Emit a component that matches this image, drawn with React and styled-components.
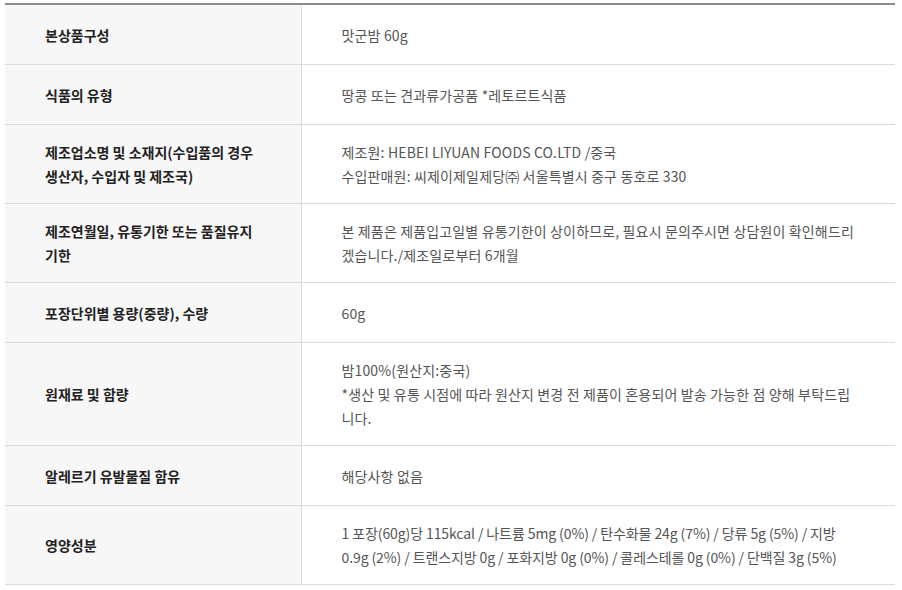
import React from 'react';
import styled, { createGlobalStyle } from 'styled-components';

const Global = createGlobalStyle`
  body {
    margin: 0;
    background: #fff;
    font-family: "Noto Sans CJK KR", "Noto Sans", sans-serif;
  }
`;

const Wrap = styled.div`
  padding: 3px 7px 0 5px;
`;

const Table = styled.table`
  width: 100%;
  border-collapse: collapse;
  border-top: 2px solid #8c8c8c;
  line-height: 24px;
`;

const Row = styled.tr`
  border-bottom: 1px solid #dcdcdc;
`;

const Th = styled.th`
  width: 296px;
  box-sizing: border-box;
  background: #f7f7f7;
  border-right: 1px solid #dcdcdc;
  padding: 15px 40px;
  text-align: left;
  vertical-align: middle;
  font-size: 14px;
  letter-spacing: 0;
  font-weight: 700;
  color: #222;
`;

const Td = styled.td`
  padding: 15px 40px;
  text-align: left;
  vertical-align: middle;
  font-size: 14px;
  letter-spacing: 0.15px;
  color: #555;
`;

const Cell = styled.div`
  min-height: 29px;
  display: flex;
  flex-direction: column;
  justify-content: center;
`;

const Line = styled.div`
  white-space: nowrap;
  letter-spacing: ${p => (p.$tight ? '-0.1px' : 'inherit')};
`;

const rows = [
  ['본상품구성', ['맛군밤 60g']],
  ['식품의 유형', ['땅콩 또는 견과류가공품 *레토르트식품']],
  ['제조업소명 및 소재지(수입품의 경우\n생산자, 수입자 및 제조국)', ['제조원: HEBEI LIYUAN FOODS CO.LTD /중국', '수입판매원: 씨제이제일제당㈜ 서울특별시 중구 동호로 330']],
  ['제조연월일, 유통기한 또는 품질유지\n기한', ['본 제품은 제품입고일별 유통기한이 상이하므로, 필요시 문의주시면 상담원이 확인해드리', '겠습니다./제조일로부터 6개월']],
  ['포장단위별 용량(중량), 수량', ['60g']],
  ['원재료 및 함량', ['밤100%(원산지:중국)', '*생산 및 유통 시점에 따라 원산지 변경 전 제품이 혼용되어 발송 가능한 점 양해 부탁드립', '니다.']],
  ['알레르기 유발물질 함유', ['해당사항 없음']],
  ['영양성분', ['1 포장(60g)당 115kcal / 나트륨 5mg (0%) / 탄수화물 24g (7%) / 당류 5g (5%) / 지방', '0.9g (2%) / 트랜스지방 0g / 포화지방 0g (0%) / 콜레스테롤 0g (0%) / 단백질 3g (5%)'], true],
];

export default function App() {
  return (
    <Wrap>
      <Global />
      <Table>
        <tbody>
          {rows.map(([head, lines, tight], i) => (
            <Row key={i}>
              <Th><Cell>{head.split('\n').map((t, j) => <Line key={j}>{t}</Line>)}</Cell></Th>
              <Td><Cell>{lines.map((t, j) => <Line key={j} $tight={tight}>{t}</Line>)}</Cell></Td>
            </Row>
          ))}
        </tbody>
      </Table>
    </Wrap>
  );
}
